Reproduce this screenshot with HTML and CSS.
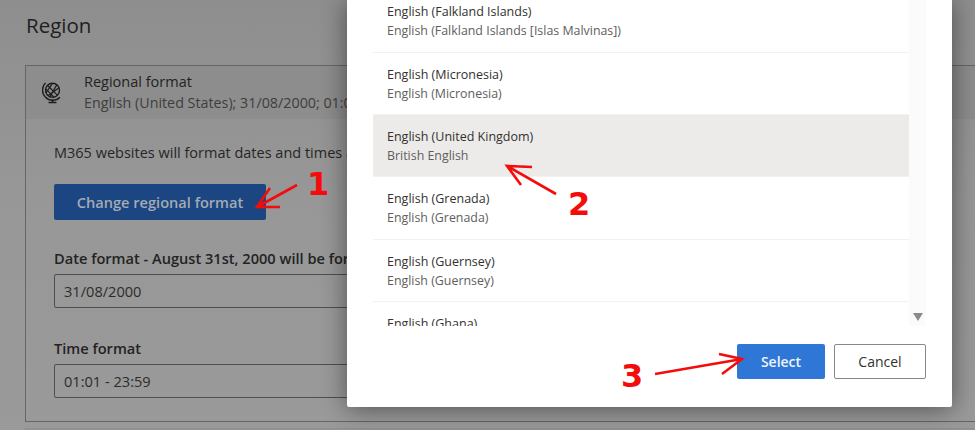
FILE: index.html
```html
<!DOCTYPE html>
<html lang="en">

<head>
    <meta charset="UTF-8">
    <meta name="viewport" content="width=device-width, initial-scale=1.0">
    <title>Region</title>
    <link rel="stylesheet" href="styles.css">
</head>

<body>

    <main class="page">

        <h1 class="page-title">Region</h1>

        <section class="card">
            <header class="card-header">
                <svg class="globe" viewBox="0 0 24 26" width="21" height="23" fill="none" stroke="#1d1d1d" stroke-width="1.6">
                    <circle cx="12" cy="10.5" r="8" />
                    <path d="M6.5 5 L17.5 16 M12 2.5 L4.5 13.5 M17 4 L9 18 M19.5 7.5 L7 16.5 M4 8.5 L14 18.5" stroke-width="1.3" />
                    <path d="M4 2 A11.5 11.5 0 0 0 20.5 18.5" />
                    <path d="M12 21 V24 M7.5 24.5 H16.5" />
                </svg>
                <div>
                    <div class="card-title">Regional format</div>
                    <div class="card-summary">English (United States); 31/08/2000; 01:01 - 23:59</div>
                </div>
            </header>

            <div class="card-body">
                <p class="intro">M365 websites will format dates and times according to your regional format.</p>
                <button class="change-button">Change regional format</button>

                <label class="field-label">Date format - August 31st, 2000 will be formatted as</label>
                <div class="field">31/08/2000</div>

                <label class="field-label">Time format</label>
                <div class="field">01:01 - 23:59</div>
            </div>
        </section>

        <section class="card next-card"></section>

    </main>

    <aside class="dialog">
        <div class="list-wrap">
            <ul class="locale-list">
                <li class="locale">
                    <div class="locale-name">English (Falkland Islands)</div>
                    <div class="locale-sub">English (Falkland Islands [Islas Malvinas])</div>
                </li>
                <li class="locale">
                    <div class="locale-name">English (Micronesia)</div>
                    <div class="locale-sub">English (Micronesia)</div>
                </li>
                <li class="locale selected">
                    <div class="locale-name">English (United Kingdom)</div>
                    <div class="locale-sub">British English</div>
                </li>
                <li class="locale">
                    <div class="locale-name">English (Grenada)</div>
                    <div class="locale-sub">English (Grenada)</div>
                </li>
                <li class="locale">
                    <div class="locale-name">English (Guernsey)</div>
                    <div class="locale-sub">English (Guernsey)</div>
                </li>
                <li class="locale">
                    <div class="locale-name">English (Ghana)</div>
                </li>
            </ul>
            <div class="scrollbar"><span class="scroll-arrow"></span></div>
        </div>

        <footer class="dialog-actions">
            <button class="btn btn-select">Select</button>
            <button class="btn btn-cancel">Cancel</button>
        </footer>
    </aside>

    <!-- red arrows and numbers drawn over the screenshot -->
    <svg class="marks" viewBox="0 0 975 430" width="975" height="430" fill="none" stroke="#f40c0c" stroke-width="2.6">
        <path d="M297 185 L257 207 M270 188 L257 207 L280 207" />
        <path d="M556 194 L507 166 M532 167 L507 166 L521 185" />
        <path d="M655 374 L742 359 M719 354 L742 359 L722 374" />
        <text class="mark-num" x="307" y="195">1</text>
        <text class="mark-num" x="568" y="215">2</text>
        <text class="mark-num" x="621" y="387">3</text>
    </svg>

</body>

</html>
```

FILE: styles.css
```css
html {
    box-sizing: border-box;
    font-family: "Open Sans", sans-serif;
}

*,
*::before,
*::after {
    box-sizing: inherit;
}

body {
    margin: 0;
    width: 975px;
    height: 430px;
    overflow: hidden;
    position: relative;
    background: linear-gradient(#8e8e8e, #979797 45%, #9a9a9a);
}

/*      Page behind the dialog      */
.page {
    padding: 11px 0 0 25px;
}

.page-title {
    margin: 0 0 26px 1px;
    font-size: 20.5px;
    line-height: 28px;
    font-weight: 400;
    color: #1f1f1f;
}

.card {
    width: 950px;
    height: 357px;
    border: 1px solid #666;
    border-right: 0;
}

.next-card {
    height: 2px;
    margin-top: 6px;
    border-color: #8f8f8f;
    border-bottom: 0;
    background-color: #939393;
}

.card-header {
    display: flex;
    align-items: center;
    height: 53px;
    padding-left: 16px;
    gap: 21px;
    background-color: #8d8d8d;
}

.card-title {
    font-size: 14.5px;
    line-height: 20px;
    color: #232323;
}

.card-summary {
    width: 263px;
    overflow: hidden;
    white-space: nowrap;
    font-size: 14.3px;
    line-height: 21px;
    color: #3e3e3e;
}

.card-body {
    padding: 24px 28px 0;
}

.intro {
    width: 293px;
    overflow: hidden;
    white-space: nowrap;
    margin: 0 0 21px;
    font-size: 14.5px;
    line-height: 20px;
    color: #262626;
}

.change-button {
    display: block;
    width: 212px;
    height: 36px;
    margin-bottom: 28px;
    border: 0;
    border-radius: 2px;
    font-family: inherit;
    font-size: 14.6px;
    font-weight: 600;
    color: #a3abb5;
    background-color: #1b4681;
}

.field-label {
    display: block;
    width: 293px;
    overflow: hidden;
    white-space: nowrap;
    font-size: 14.6px;
    font-weight: 600;
    line-height: 20px;
    color: #232323;
}

.field {
    width: 600px;
    height: 34px;
    margin: 6px 0 30px;
    padding: 0 9px;
    border: 1px solid #4f4f4f;
    border-radius: 2px;
    font-size: 14.6px;
    line-height: 33px;
    color: #2c2c2c;
}

.field:last-child {
    margin-bottom: 0;
}

/*      Dialog      */
.dialog {
    position: absolute;
    top: 0;
    left: 347px;
    width: 605px;
    height: 407px;
    padding: 0 26px;
    border-radius: 0 0 2px 2px;
    background-color: #fff;
    box-shadow: 0 2px 26px rgba(0, 0, 0, .48);
}

.list-wrap {
    display: flex;
    height: 326px;
    overflow: hidden;
}

.locale-list {
    flex: 1;
    margin: -9.8px 0 0;
    padding: 0;
    list-style: none;
}

.locale {
    height: 62.4px;
    padding: 12px 14px 0;
    border-bottom: 1px solid #f3f2f1;
}

.locale.selected {
    background-color: #edebe9;
}

.locale-name {
    font-size: 12.5px;
    line-height: 19px;
    color: #323130;
}

.locale-sub {
    font-size: 12.4px;
    line-height: 19px;
    color: #605e5c;
}

.scrollbar {
    display: flex;
    justify-content: center;
    align-items: flex-end;
    width: 17px;
    padding-bottom: 5px;
    background-color: #fbfbfb;
}

.scroll-arrow {
    border-top: 8px solid #8a8a8a;
    border-left: 5.5px solid transparent;
    border-right: 5.5px solid transparent;
}

.dialog-actions {
    display: flex;
    justify-content: flex-end;
    gap: 9px;
    margin-top: 18px;
}

.btn {
    height: 35px;
    border-radius: 2px;
    font-family: inherit;
    font-size: 14px;
    font-weight: 600;
}

.btn-select {
    width: 88px;
    border: 0;
    color: #eef4fc;
    background-color: #2e77d7;
}

.btn-cancel {
    width: 92px;
    border: 1px solid #8a8886;
    font-weight: 500;
    color: #323130;
    background-color: #fff;
}

/*      Annotations     */
.marks {
    position: absolute;
    top: 0;
    left: 0;
}

.mark-num {
    font-family: "DejaVu Sans", sans-serif;
    font-size: 32px;
    font-weight: 700;
    fill: #f40c0c;
    stroke: none;
}
```
